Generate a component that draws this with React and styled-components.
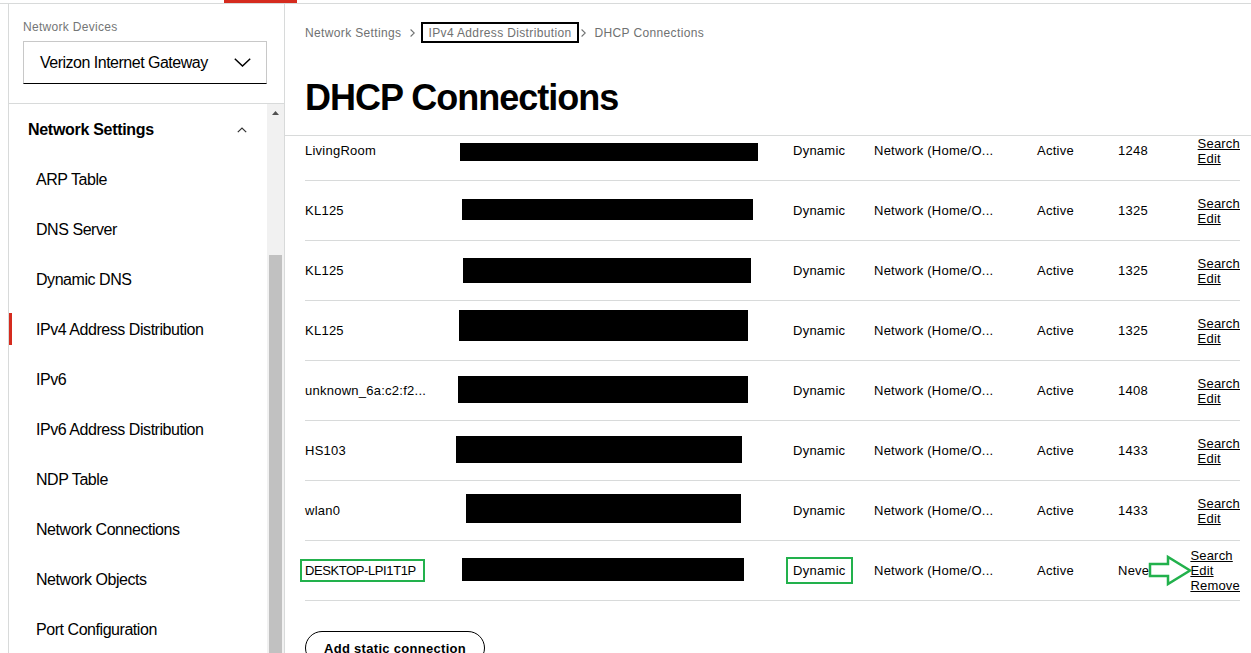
import React from 'react';
import styled, { createGlobalStyle } from 'styled-components';

const Global = createGlobalStyle`
  html, body { margin: 0; padding: 0; background: #fff; }
  body { font-family: "Liberation Sans", Arial, sans-serif; color: #000; overflow: hidden; }
  * { box-sizing: border-box; }
`;

const Page = styled.div`
  width: 1251px;
  height: 653px;
  display: flex;
  flex-direction: column;
  overflow: hidden;
`;

const TopStrip = styled.div`
  height: 4px;
  flex-shrink: 0;
  border-bottom: 1px solid #d8dada;
  display: flex;
`;

const TabIndicator = styled.div`
  margin-left: 224px;
  width: 73px;
  height: 3px;
  background: #d52b1e;
`;

const Body = styled.div`
  flex: 1;
  min-height: 0;
  display: flex;
  padding-left: 8px;
`;

const Sidebar = styled.aside`
  width: 277px;
  flex-shrink: 0;
  border-left: 1px solid #d8dada;
  border-right: 1px solid #d8dada;
  display: flex;
  flex-direction: column;
`;

const SidebarTop = styled.div`
  height: 100px;
  flex-shrink: 0;
  border-bottom: 1px solid #d8dada;
  padding: 15px 17px 0 14px;
`;

const FieldLabel = styled.div`
  font-size: 12px;
  line-height: 16px;
  letter-spacing: 0.3px;
  color: #747676;
`;

const Select = styled.div`
  margin-top: 6px;
  height: 43px;
  border: 1px solid #c8c8c8;
  border-bottom: 1px solid #000;
  display: flex;
  align-items: center;
  justify-content: space-between;
  padding: 0 15px 0 16px;
  font-size: 16px;
  letter-spacing: -0.5px;
  color: #000;
`;

const MenuArea = styled.div`
  flex: 1;
  min-height: 0;
  display: flex;
`;

const Menu = styled.nav`
  flex: 1;
  overflow: hidden;
  padding-top: 1px;
`;

const GroupHeader = styled.div`
  height: 50px;
  display: flex;
  align-items: center;
  justify-content: space-between;
  padding: 0 20px 0 19px;
  font-size: 16px;
  font-weight: 700;
  letter-spacing: -0.3px;
`;

const MenuItem = styled.div`
  position: relative;
  height: 50px;
  display: flex;
  align-items: center;
  padding-left: 27px;
  font-size: 16px;
  letter-spacing: -0.45px;
  color: #000;
  &::before {
    content: '';
    display: ${p => (p.$active ? 'block' : 'none')};
    position: absolute;
    left: -1px;
    top: 8px;
    width: 4px;
    height: 32px;
    background: #d52b1e;
  }
`;

const ScrollTrack = styled.div`
  width: 17px;
  flex-shrink: 0;
  background: #f1f1f1;
  display: flex;
  flex-direction: column;
  align-items: center;
`;

const ScrollArrow = styled.div`
  height: 17px;
  display: flex;
  align-items: center;
  justify-content: center;
`;

const ScrollThumb = styled.div`
  margin-top: 134px;
  width: 13px;
  flex: 1;
  background: #c1c1c1;
`;

const Main = styled.main`
  flex: 1;
  min-width: 0;
  display: flex;
  flex-direction: column;
`;

const Header = styled.header`
  flex-shrink: 0;
  padding: 18px 11px 19px 20px;
  border-bottom: 1px solid #d8dada;
`;

const Breadcrumb = styled.div`
  height: 21px;
  display: flex;
  align-items: center;
  font-size: 12px;
  letter-spacing: 0.36px;
  color: #6f7171;
`;

const Sep = styled.svg`
  margin: 0 ${p => p.$mr}px 0 ${p => p.$ml}px;
  flex-shrink: 0;
`;

const CrumbBox = styled.span`
  height: 21px;
  display: flex;
  align-items: center;
  border: 2px solid #000;
  padding: 0 5px;
`;

const Title = styled.h1`
  margin: 37px 0 0;
  font-size: 36px;
  line-height: 36px;
  font-weight: 700;
  letter-spacing: -1px;
  color: #000;
`;

const TableArea = styled.section`
  flex: 1;
  min-height: 0;
  overflow: hidden;
  padding: 0 11px 0 20px;
`;

const TableInner = styled.div`
  margin-top: -15px;
`;

const Row = styled.div`
  position: relative;
  height: 60px;
  display: grid;
  grid-template-columns: 150px 338px 81px 163px 81px 67px 1fr;
  align-items: center;
  border-bottom: 1px solid #d8dada;
  font-size: 13px;
  letter-spacing: 0.25px;
  color: #000;
`;

const Cell = styled.div`
  white-space: nowrap;
  overflow: visible;
`;

const Tag = styled.span`
  display: inline-block;
  line-height: 15px;
  ${p => p.$boxed && `
    border: 2px solid #22b14c;
    padding: ${p.$pad};
    margin-left: ${p.$ml}px;
    letter-spacing: ${p.$ls};
  `}
`;

const Redact = styled.div`
  align-self: start;
  margin-top: ${p => p.$top}px;
  margin-left: ${p => p.$ml}px;
  width: ${p => p.$w}px;
  height: ${p => p.$h}px;
  background: #000;
`;

const Actions = styled.div`
  display: flex;
  justify-content: flex-end;
`;

const LinkStack = styled.div`
  display: flex;
  flex-direction: column;
  align-items: flex-start;
`;

const ActionLink = styled.a`
  font-size: 13px;
  line-height: 15px;
  color: #000;
  text-decoration: underline;
  letter-spacing: 0.2px;
`;

const Arrow = styled.svg`
  position: absolute;
  left: 841px;
  top: 13px;
  pointer-events: none;
`;

const AddButton = styled.button`
  margin-top: 30px;
  height: 34px;
  padding: 0 18px;
  border: 1px solid #000;
  border-radius: 17px;
  background: #fff;
  font-family: "Liberation Sans", Arial, sans-serif;
  font-size: 13px;
  font-weight: 700;
  letter-spacing: 0.3px;
  color: #000;
  display: inline-flex;
  align-items: center;
`;

const menuItems = [
  'ARP Table',
  'DNS Server',
  'Dynamic DNS',
  'IPv4 Address Distribution',
  'IPv6',
  'IPv6 Address Distribution',
  'NDP Table',
  'Network Connections',
  'Network Objects',
  'Port Configuration',
];

const rows = [
  { name: 'LivingRoom', bar: [22, 5, 298, 18], num: '1248' },
  { name: 'KL125', bar: [18, 7, 291, 21], num: '1325' },
  { name: 'KL125', bar: [17, 8, 288, 25], num: '1325' },
  { name: 'KL125', bar: [9, 4, 289, 31], num: '1325' },
  { name: 'unknown_6a:c2:f2...', bar: [15, 3, 290, 27], num: '1408' },
  { name: 'HS103', bar: [15, 1, 286, 27], num: '1433' },
  { name: 'wlan0', bar: [13, 11, 275, 29], num: '1433' },
  { name: 'DESKTOP-LPI1T1P', bar: [17, 7, 282, 23], num: 'Never', highlight: true },
];

function Chevron({ ml, mr }) {
  return (
    <Sep $ml={ml} $mr={mr} width="5" height="8" viewBox="0 0 5 8">
      <polyline points="0.6,0.5 4.3,4 0.6,7.5" fill="none" stroke="#6f7171" strokeWidth="1.1" />
    </Sep>
  );
}

export default function App() {
  return (
    <Page>
      <Global />
      <TopStrip>
        <TabIndicator />
      </TopStrip>
      <Body>
        <Sidebar>
          <SidebarTop>
            <FieldLabel>Network Devices</FieldLabel>
            <Select>
              <span>Verizon Internet Gateway</span>
              <svg width="17" height="9" viewBox="0 0 17 9">
                <polyline points="0.8,0.8 8.5,8 16.2,0.8" fill="none" stroke="#000" strokeWidth="1.5" />
              </svg>
            </Select>
          </SidebarTop>
          <MenuArea>
            <Menu>
              <GroupHeader>
                <span>Network Settings</span>
                <svg width="10" height="6" viewBox="0 0 10 6">
                  <polyline points="0.8,5.2 5,1 9.2,5.2" fill="none" stroke="#333" strokeWidth="1.2" />
                </svg>
              </GroupHeader>
              {menuItems.map(item => (
                <MenuItem key={item} $active={item === 'IPv4 Address Distribution'}>
                  {item}
                </MenuItem>
              ))}
            </Menu>
            <ScrollTrack>
              <ScrollArrow>
                <svg width="7" height="4" viewBox="0 0 7 4">
                  <polygon points="0,4 3.5,0 7,4" fill="#505050" />
                </svg>
              </ScrollArrow>
              <ScrollThumb />
            </ScrollTrack>
          </MenuArea>
        </Sidebar>
        <Main>
          <Header>
            <Breadcrumb>
              <span>Network Settings</span>
              <Chevron ml={9} mr={6} />
              <CrumbBox>IPv4 Address Distribution</CrumbBox>
              <Chevron ml={2} mr={9} />
              <span>DHCP Connections</span>
            </Breadcrumb>
            <Title>DHCP Connections</Title>
          </Header>
          <TableArea>
            <TableInner>
              {rows.map((r, i) => (
                <Row key={i}>
                  <Cell>
                    <Tag $boxed={r.highlight} $pad="2px 7px 2px 3px" $ml={-5} $ls="-0.4px">
                      {r.name}
                    </Tag>
                  </Cell>
                  <Redact $top={r.bar[0]} $ml={r.bar[1]} $w={r.bar[2]} $h={r.bar[3]} />
                  <Cell>
                    <Tag $boxed={r.highlight} $pad="4px 5px" $ml={-7} $ls="0.3px">
                      Dynamic
                    </Tag>
                  </Cell>
                  <Cell>Network (Home/O...</Cell>
                  <Cell>Active</Cell>
                  <Cell>{r.num}</Cell>
                  <Actions>
                    <LinkStack>
                      <ActionLink>Search</ActionLink>
                      <ActionLink>Edit</ActionLink>
                      {r.highlight && <ActionLink>Remove</ActionLink>}
                    </LinkStack>
                  </Actions>
                  {r.highlight && (
                    <Arrow width="46" height="34" viewBox="0 0 46 34">
                      <polygon
                        points="4,10 22,10 22,3 44,16.5 22,30 22,22 4,22"
                        fill="#fff"
                        stroke="#22b14c"
                        strokeWidth="2.5"
                        strokeLinejoin="miter"
                      />
                    </Arrow>
                  )}
                </Row>
              ))}
              <AddButton>Add static connection</AddButton>
            </TableInner>
          </TableArea>
        </Main>
      </Body>
    </Page>
  );
}
